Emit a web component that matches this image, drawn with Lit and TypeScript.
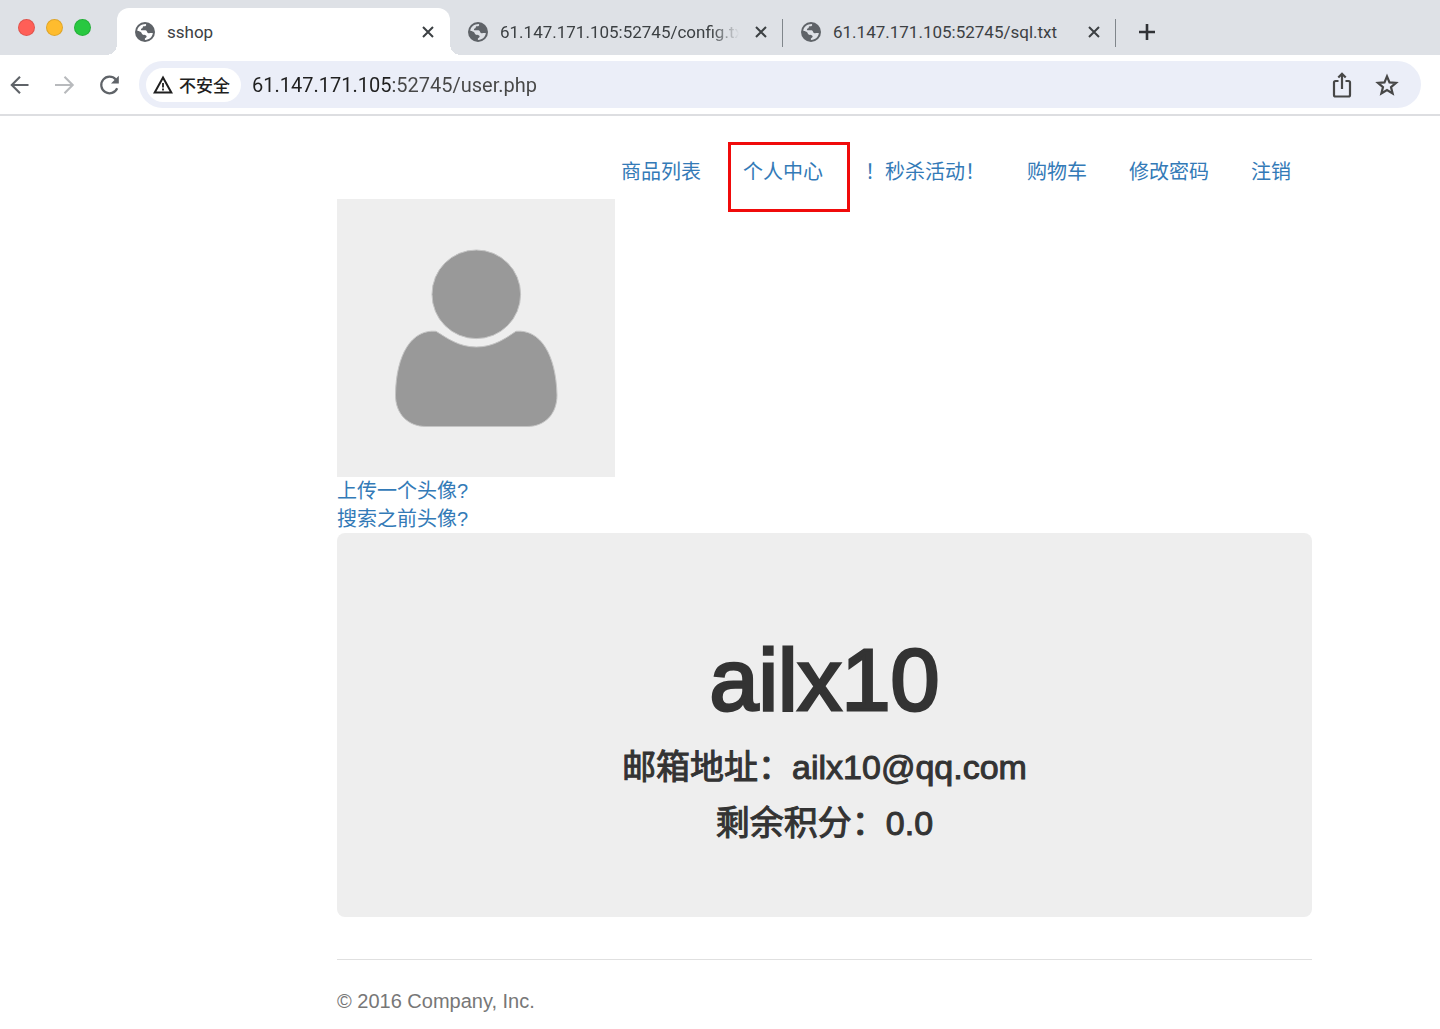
import { LitElement, html, svg, css } from "lit";
import { customElement, property } from "lit/decorators.js";

const globe = html`<svg class="globe" viewBox="0 0 20 20" aria-hidden="true">
  <circle cx="10" cy="10" r="10" fill="#5f6368"></circle>
  <path fill="var(--tab-bg)" d="M2.200 8.400C3 4.800 6.200 2.200 10.800 2.100C11.600 2.900 11.200 4 10.200 4.200H8.300C7.500 4.600 8 5.900 7.200 6.300C6.200 6.600 5.600 7.300 6.200 8.200H10.600C12.200 8.400 11.800 10.400 13 11C14.200 11.600 15.800 10.700 17.900 11.200C17.300 14.900 14.400 17.700 10.200 17.900C9.400 17.200 9.800 16.100 10.800 15.700C11.800 15.300 11.900 14 11 13.400C10 12.800 8.200 13.400 7.300 12.300C6.400 11.200 6.600 10.400 5.400 9.800C4.400 9.300 3.200 9.400 2.200 8.400Z"></path>
</svg>`;

const closeIcon = svg`<svg viewBox="0 0 20 20" aria-hidden="true"><path d="M5 5l10 10M15 5L5 15" stroke="#3c4043" stroke-width="2" fill="none"></path></svg>`;

@customElement("browser-tab")
class BrowserTab extends LitElement {
  @property() label = "";
  @property({ type: Boolean, reflect: true }) active = false;
  static styles = css`
    :host { --tab-bg: #dee1e6; position: relative; display: flex; align-items: center; flex: 0 1 333px; min-width: 0; box-sizing: border-box; padding: 0 12px 0 18px; }
    :host(:not([active]))::after { content: ""; position: absolute; right: 0; top: 11px; width: 1px; height: 28px; background: #80868b; }
    :host([active]) { --tab-bg: #fff; background: #fff; border-radius: 12px 12px 0 0; }
    .curve { position: absolute; bottom: 0; width: 11px; height: 11px; }
    .left { left: -11px; background: radial-gradient(circle at 0 0, transparent 11px, #fff 11px); }
    .right { right: -11px; background: radial-gradient(circle at 100% 0, transparent 11px, #fff 11px); }
    .globe { width: 20px; height: 20px; flex: none; }
    .title { flex: 1; min-width: 0; overflow: hidden; white-space: nowrap; text-align: left; border: 0; background: none; margin: 0 12px; padding: 0; font: 17px/24px Roboto, "Noto Sans CJK SC", sans-serif; color: #3c4043; }
    .fade { mask-image: linear-gradient(to right, #000 calc(100% - 28px), transparent); }
    .close { width: 20px; height: 20px; flex: none; padding: 0; border: 0; background: none; }
    .close svg { display: block; }
  `;
  render() {
    return html`${this.active ? html`<span class="curve left"></span><span class="curve right"></span>` : ""}
      ${globe}<button class="title ${this.label.length > 28 ? "fade" : ""}" role="tab" aria-selected=${this.active}>${this.label}</button>
      <button class="close" aria-label="关闭">${closeIcon}</button>`;
  }
}

@customElement("browser-bar")
class BrowserBar extends LitElement {
  static styles = css`
    :host { display: block; }
    button { border: 0; background: none; padding: 0; margin: 0; }
    svg { display: block; }
    .strip { display: flex; height: 47px; padding: 8px 0 0 18px; background: #dee1e6; }
    .lights { display: flex; flex: none; gap: 11px; width: 99px; padding-top: 11px; }
    .light { width: 17px; height: 17px; border-radius: 50%; box-sizing: border-box; border: 1px solid rgba(0, 0, 0, 0.12); }
    .red { background: #ff5f57; } .amber { background: #febc2e; } .green { background: #28c840; }
    .tabs { display: flex; min-width: 0; flex: 0 1 1000px; }
    .add { margin-left: 20px; }
    .tools { display: flex; align-items: center; height: 47px; padding: 6px 19px 6px 8px; border-bottom: 2px solid #dddee1; }
    .arrows { display: flex; gap: 21px; }
    .omni { flex: 1; display: flex; align-items: center; min-width: 0; height: 47px; margin-left: 17px; padding: 0 22px 0 7px; border-radius: 24px; background: #ebeef8; box-sizing: border-box; }
    .chip { display: flex; align-items: center; gap: 5px; flex: none; height: 34px; padding: 0 11px 0 6px; border-radius: 17px; background: #fff; font: 500 17px/24px "Noto Sans CJK SC", sans-serif; color: #1f1f1f; }
    .url { flex: 1; min-width: 0; margin: 0 11px; padding: 0; border: 0; outline: 0; font: 20px/28px Roboto, sans-serif; color: transparent; background: linear-gradient(to right, #1f1f1f 139px, #474747 139px); background-clip: text; -webkit-background-clip: text; }
    .actions { display: flex; align-items: center; gap: 22px; }
  `;
  render() {
    return html`
      <div class="strip">
        <div class="lights"><span class="light red"></span><span class="light amber"></span><span class="light green"></span></div>
        <div class="tabs" role="tablist">
          <browser-tab active label="sshop"></browser-tab>
          <browser-tab label="61.147.171.105:52745/config.txt"></browser-tab>
          <browser-tab label="61.147.171.105:52745/sql.txt"></browser-tab>
        </div>
        <button class="add" aria-label="新标签页"><svg width="20" height="20" viewBox="0 0 20 20"><path d="M10 2v16M2 10h16" stroke="#303236" stroke-width="2.6" fill="none"></path></svg></button>
      </div>
      <div class="tools">
        <div class="arrows">
          <button aria-label="后退"><svg width="24" height="24" viewBox="0 0 24 24"><path d="M20.5 12H4M12 3.8L3.8 12l8.200 8.200" stroke="#5f6368" stroke-width="2.100" fill="none"></path></svg></button>
          <button aria-label="前进"><svg width="24" height="24" viewBox="0 0 24 24"><path d="M2 12h17.500M11.500 3.800l8.200 8.200-8.200 8.200" stroke="#b8babd" stroke-width="2.100" fill="none"></path></svg></button>
          <button aria-label="重新加载"><svg width="24" height="24" viewBox="0 0 24 24"><path d="M19.200 15.200A8.300 8.300 0 1 1 17.800 6.500" stroke="#5f6368" stroke-width="2.200" fill="none"></path><path d="M20.800 2.800v7.800h-7.800z" fill="#5f6368"></path></svg></button>
        </div>
        <div class="omni">
          <button class="chip"><svg width="22" height="22" viewBox="0 0 22 22"><path d="M11 3.500L19.300 18.500H2.700z" stroke="#1f1f1f" stroke-width="2" fill="none"></path><path d="M11 9v4.500M11 14.600v2" stroke="#1f1f1f" stroke-width="1.800"></path></svg>不安全</button>
          <input class="url" aria-label="网址" value="61.147.171.105:52745/user.php" />
          <div class="actions">
            <button aria-label="分享"><svg width="22" height="28" viewBox="0 0 22 28"><path d="M7.500 10H4.500A1.500 1.500 0 0 0 3 11.500V24a1.500 1.500 0 0 0 1.500 1.500h13A1.500 1.500 0 0 0 19 24V11.500a1.500 1.500 0 0 0-1.500-1.500h-3M11 18V3M7.300 6.500L11 2.800l3.700 3.700" stroke="#474747" stroke-width="2.200" fill="none"></path></svg></button>
            <button aria-label="收藏"><svg width="24" height="24" viewBox="0 0 24 24"><path d="M12 3.400l2.500 6 6.500.5-5 4.200 1.600 6.300L12 17l-5.600 3.400L8 14.100 3 9.900l6.500-.5z" stroke="#474747" stroke-width="2.200" fill="none"></path></svg></button>
          </div>
        </div>
      </div>`;
  }
}

@customElement("app-root")
class AppRoot extends LitElement {
  static styles = css`
    :host { display: block; background: #fff; min-height: 100vh; font: 20px/28px "Liberation Sans", "Noto Sans CJK SC", sans-serif; color: #333; }
    a { color: #337ab7; text-decoration: none; }
    .page { padding: 28px 128px 0 337px; }
    .nav { display: flex; justify-content: flex-end; gap: 42px; padding: 14px 21px 13px; }
    .nav a { white-space: nowrap; }
    .marked { position: relative; }
    .mark { position: absolute; inset: -16px -27px -26px -15px; border: 3px solid #f00b0b; pointer-events: none; }
    .avatar { display: block; width: 278px; height: 278px; }
    .links { display: flex; flex-direction: column; align-items: flex-start; }
    .card { padding: 98px 80px 76px; border-radius: 8px; background: #eee; text-align: center; }
    h1, h3 { margin: 0; font-weight: 400; }
    h1 { font-size: 88px; line-height: 98px; -webkit-text-stroke: 3px #333; }
    h3 { margin-top: 20px; font-size: 34px; line-height: 36px; -webkit-text-stroke: 1px #333; }
    .foot { margin-top: 42px; padding-top: 27px; border-top: 1px solid #e0e0e0; color: #777; }
    .foot p { margin: 0; }
  `;
  render() {
    const after = ["！秒杀活动！", "购物车", "修改密码", "注销"];
    return html`
      <browser-bar></browser-bar>
      <main class="page">
        <nav class="nav">
          <a href="#">商品列表</a>
          <a href="#" class="marked">个人中心<span class="mark"></span></a>
          ${after.map((t) => html`<a href="#">${t}</a>`)}
        </nav>
        <svg class="avatar" viewBox="0 0 278 278" role="img" aria-label="头像">
          <rect width="278" height="278" fill="#eee"></rect>
          <g fill="#999" stroke="#c4c4c4" stroke-width="1">
            <circle cx="139.300" cy="95.300" r="44.300"></circle>
            <path d="M99 132.300C75 130 59 155 58.500 196C58.500 215 71 227.500 89 227.500H190C208 227.500 220 215 220 196C219 155 203 130 179 132.300C169 139 157 148 139.300 148S110 139 99 132.300Z"></path>
          </g>
        </svg>
        <div class="links"><a href="#">上传一个头像?</a><a href="#">搜索之前头像?</a></div>
        <section class="card">
          <h1>ailx10</h1>
          <h3>邮箱地址：ailx10@qq.com</h3>
          <h3>剩余积分：0.0</h3>
        </section>
        <footer class="foot"><p>© 2016 Company, Inc.</p></footer>
      </main>`;
  }
}
